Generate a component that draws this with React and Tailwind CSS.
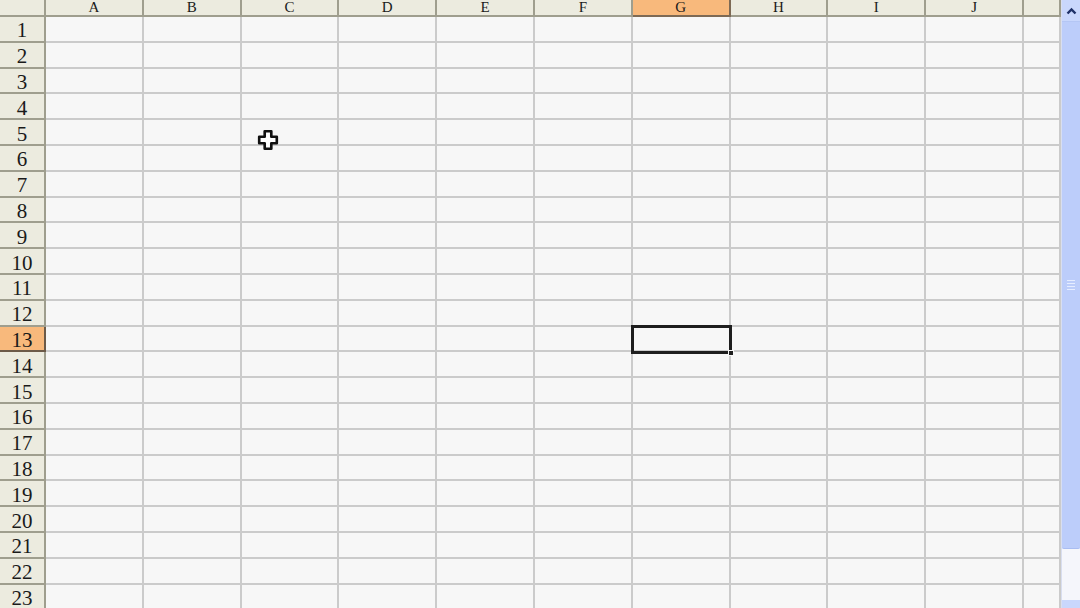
import React from 'react';

const cols = ['A', 'B', 'C', 'D', 'E', 'F', 'G', 'H', 'I', 'J', ''];
const rows = Array.from({ length: 23 }, (_, i) => i + 1);

const headerFont = { fontFamily: '"Liberation Serif", "DejaVu Serif", serif' };

const ColHeader = ({ label }) => {
  const active = label === 'G';
  return (
    <div
      className={`flex items-center justify-center overflow-hidden border-r-2 border-b-2 text-[15px] leading-none text-[#1a1a1a] ${
        active ? 'bg-[#f8b97c] border-[#7d6a55]' : 'bg-[#ecebdf] border-[#9f9e8e]'
      }`}
      style={headerFont}
    >
      {label}
    </div>
  );
};

const RowHeader = ({ n }) => {
  const active = n === 13;
  return (
    <div
      className={`flex items-center justify-center border-r-2 border-b-2 text-[21px] leading-none pt-[4px] text-[#1a1a1a] ${
        active ? 'bg-[#f8b97c] border-[#6c5a48]' : 'bg-[#ecebdf] border-[#9f9e8e]'
      }`}
      style={headerFont}
    >
      {n}
    </div>
  );
};

const Cell = ({ selected }) => (
  <div className="relative bg-[#f7f7f7] border-r-2 border-b-2 border-[#cbcbcb]">
    {selected && (
      <div className="absolute -left-[2px] -top-[2px] w-[101px] h-[29px] border-[3px] border-[#1e1e1e] z-10">
        <div className="absolute -right-[5px] -bottom-[5px] w-[6px] h-[6px] bg-[#1e1e1e] border border-[#f7f7f7]" />
      </div>
    )}
  </div>
);

export default function App() {
  return (
    <div className="flex w-[1080px] h-[608px] overflow-hidden bg-[#f7f7f7]">
      <div className="relative flex-1 overflow-hidden">
        <div className="grid grid-cols-[46px_repeat(10,97.8px)_1fr] grid-rows-[17px_repeat(23,25.8px)]">
          <div className="bg-[#ecebdf] border-r-2 border-b-2 border-[#9f9e8e]" />
          {cols.map((c, i) => (
            <ColHeader key={'h' + i} label={c} />
          ))}
          {rows.map((r) => (
            <React.Fragment key={r}>
              <RowHeader n={r} />
              {cols.map((c, i) => (
                <Cell key={r + '-' + i} selected={r === 13 && c === 'G'} />
              ))}
            </React.Fragment>
          ))}
        </div>
        <svg
          className="absolute left-[257px] top-[129px]"
          width="22"
          height="22"
          viewBox="0 0 20 20"
        >
          <path
            d="M7 2h6v5h5v6h-5v5H7v-5H2V7h5z"
            fill="#ffffff"
            stroke="#111"
            strokeWidth="2.4"
            strokeLinejoin="round"
          />
        </svg>
      </div>
      <div className="w-[19px] flex flex-col bg-[#eef1fb] border-l border-[#d8def0]">
        <div className="h-[22px] flex items-center justify-center bg-[#c9d7fc] border-b border-[#b4c6f4]">
          <svg width="11" height="8" viewBox="0 0 11 8">
            <path d="M1.5 6.5L5.5 2.5L9.5 6.5" fill="none" stroke="#1f3168" strokeWidth="2.4" />
          </svg>
        </div>
        <div className="h-[527px] flex flex-col items-center justify-center gap-[2px] bg-[#bccdfa] rounded-b-[2px] border-b border-[#a9bdf2]">
          <div className="w-[8px] h-[1px] bg-[#e6edff]" />
          <div className="w-[8px] h-[1px] bg-[#e6edff]" />
          <div className="w-[8px] h-[1px] bg-[#e6edff]" />
          <div className="w-[8px] h-[1px] bg-[#e6edff]" />
        </div>
        <div className="flex-1 bg-[#f5f6fb]" />
        <div className="h-[8px] bg-[#c9d7fc]" />
      </div>
    </div>
  );
}
